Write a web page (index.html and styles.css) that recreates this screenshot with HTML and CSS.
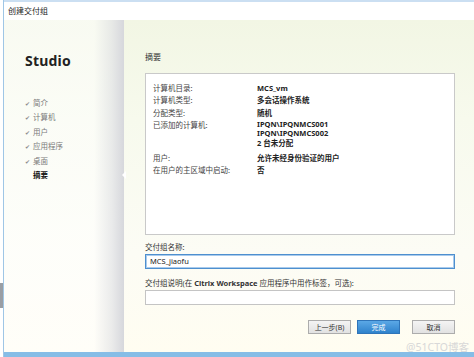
FILE: index.html
```html
<!DOCTYPE html>
<html lang="zh-CN">
<head>
    <meta charset="UTF-8">
    <title>创建交付组</title>
    <link rel="stylesheet" href="styles.css">
</head>
<body>
    <div class="desk">
        <div class="desk-stub"></div>
    </div>
    <div class="window">
        <div class="top-strip"></div>
        <div class="title-bar">创建交付组</div>
        <div class="main">
            <div class="sidebar">
                <div class="brand">Studio</div>
                <ul class="steps">
                    <li class="done"><span class="tick">✔</span>简介</li>
                    <li class="done"><span class="tick">✔</span>计算机</li>
                    <li class="done"><span class="tick">✔</span>用户</li>
                    <li class="done"><span class="tick">✔</span>应用程序</li>
                    <li class="done"><span class="tick">✔</span>桌面</li>
                    <li class="current">摘要</li>
                </ul>
                <div class="notch"></div>
            </div>
            <div class="content">
                <div class="heading">摘要</div>
                <div class="summary">
                    <div class="row">
                        <div class="label">计算机目录:</div>
                        <div class="value">MCS_vm</div>
                    </div>
                    <div class="row">
                        <div class="label">计算机类型:</div>
                        <div class="value">多会话操作系统</div>
                    </div>
                    <div class="row">
                        <div class="label">分配类型:</div>
                        <div class="value">随机</div>
                    </div>
                    <div class="row">
                        <div class="label">已添加的计算机:</div>
                        <div class="value multi">IPQN\IPQNMCS001<br>IPQN\IPQNMCS002<br>2 台未分配</div>
                    </div>
                    <div class="row gap">
                        <div class="label">用户:</div>
                        <div class="value">允许未经身份验证的用户</div>
                    </div>
                    <div class="row">
                        <div class="label">在用户的主区域中启动:</div>
                        <div class="value">否</div>
                    </div>
                </div>
                <div class="field-label">交付组名称:</div>
                <div class="input focused">MCS_jiaofu</div>
                <div class="field-label second">交付组说明(在 <b>Citrix Workspace</b> 应用程序中用作标签，可选):</div>
                <div class="input"></div>
                <div class="buttons">
                    <button class="btn">上一步(B)</button>
                    <button class="btn primary">完成</button>
                    <button class="btn cancel">取消</button>
                </div>
            </div>
        </div>
        <div class="bottom-bar"></div>
        <div class="watermark">@51CTO博客</div>
    </div>
</body>
</html>
```

FILE: styles.css
```css
body {
    margin: 0;
    padding: 0;
    width: 474px;
    height: 357px;
    overflow: hidden;
    display: flex;
    font-family: 'Noto Sans', 'Noto Sans CJK SC', sans-serif;
    background: #ffffff;
    color: #333;
}

.desk {
    width: 3px;
    background: #ffffff;
}

.desk-stub {
    margin-top: 283px;
    height: 25px;
    background: #9a9ea4;
}

.window {
    position: relative;
    flex: 1;
    display: flex;
    flex-direction: column;
    border-left: 1px solid #9fc6e6;
}

.top-strip {
    height: 2px;
    background: #cbdff2;
}

.title-bar {
    height: 18px;
    line-height: 18px;
    padding-left: 4px;
    font-size: 8px;
    color: #222;
    background: #ffffff;
}

.main {
    flex: 1;
    display: flex;
    background: linear-gradient(180deg, #f2f6e4 0%, #f7faed 30%, #fcfcf5 70%, #fffdf1 100%);
}

/* Left wizard steps */
.sidebar {
    position: relative;
    width: 120px;
    padding-left: 21px;
    box-sizing: border-box;
    background: linear-gradient(90deg, rgba(255,255,255,0.5) 0%, rgba(255,255,255,0.5) 75%, rgba(226,227,231,0.7) 90%, #d6d7dc 100%);
}

.brand {
    margin-top: 31px;
    font-size: 14px;
    font-weight: bold;
    color: #222;
    letter-spacing: 0.2px;
}

.steps {
    list-style: none;
    margin: 26px 0 0;
    padding: 0;
    font-size: 7.5px;
}

.steps li {
    height: 14.4px;
    line-height: 14.4px;
    color: #7a7a7a;
}

.tick {
    display: inline-block;
    width: 8px;
    font-size: 6px;
    line-height: 10px;
    color: #8a8a8a;
}

.steps .current {
    padding-left: 8px;
    font-weight: bold;
    color: #111;
}

.notch {
    position: absolute;
    right: -2px;
    top: 151px;
    width: 0;
    height: 0;
    border-top: 4px solid transparent;
    border-bottom: 4px solid transparent;
    border-right: 4px solid #ffffff;
}

/* Summary side */
.content {
    flex: 1;
    padding-left: 21px;
    padding-right: 19px;
}

.heading {
    margin-top: 31px;
    font-size: 8px;
    line-height: 12px;
    color: #333;
}

.summary {
    margin-top: 10px;
    height: 162px;
    border: 1px solid #c9c9c9;
    background: #ffffff;
    padding: 8px 0 0 7px;
    box-sizing: border-box;
}

.row {
    display: flex;
    font-size: 7.5px;
    line-height: 12.3px;
}

.row.gap {
    margin-top: 3px;
}

.label {
    width: 104px;
    color: #444;
}

.value {
    font-weight: bold;
    color: #222;
}

.value.multi {
    line-height: 9.6px;
    padding-top: 1px;
}

.field-label {
    margin-top: 6px;
    font-size: 7.5px;
    line-height: 12px;
    color: #333;
}

.field-label.second {
    margin-top: 8px;
}

.input {
    height: 15px;
    line-height: 13px;
    box-sizing: border-box;
    border: 1px solid #c4c4c4;
    background: #ffffff;
    padding-left: 4px;
    font-size: 7.5px;
    color: #222;
    margin-top: 1px;
}

.input.focused {
    border: 1px solid #4e8fcf;
    box-shadow: inset 0 0 0 1px #a9cbec;
}

.buttons {
    display: flex;
    justify-content: flex-end;
    margin-top: 15px;
}

.btn {
    height: 14px;
    width: 43px;
    padding: 0;
    font-family: 'Noto Sans', 'Noto Sans CJK SC', sans-serif;
    font-size: 7px;
    color: #333;
    border: 1px solid #acacac;
    background: linear-gradient(180deg, #f4f4f4, #e2e2e2);
}

.btn.primary {
    margin-left: 6px;
    color: #ffffff;
    border-color: #2f74b8;
    background: linear-gradient(180deg, #5ba8e6, #2f82cc);
}

.btn.cancel {
    margin-left: 12px;
}

.bottom-bar {
    height: 5px;
    background: #86bde6;
}

.watermark {
    position: absolute;
    right: 5px;
    bottom: 3px;
    font-size: 10.5px;
    color: #d8d8d8;
}
```
